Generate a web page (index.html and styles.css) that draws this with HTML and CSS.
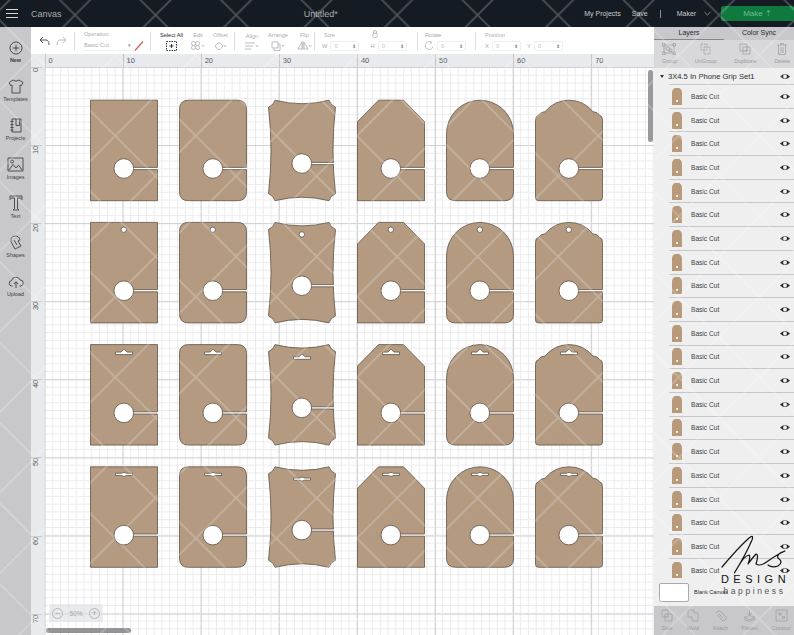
FILE: index.html
```html
<!DOCTYPE html>
<html lang="en">
<head>
    <meta charset="UTF-8">
    <title>Canvas - Untitled</title>
    <link rel="stylesheet" href="styles.css">
</head>
<body>
    <svg class="defs" width="0" height="0">
        <defs>
            <path id="eye" d="M0 3.5Q5-1.5 10 3.5Q5 8.5 0 3.5ZM5 1.6a1.9 1.9 0 1 0 .01 0Z" fill-rule="evenodd"/>
            <path id="s1" d="M0 0H67V100.5H0Z"/>
            <path id="s2" d="M9 0H58Q67 0 67 9V91.5Q67 100.5 58 100.5H9Q0 100.5 0 91.5V9Q0 0 9 0Z"/>
            <path id="s3" d="M0 7Q5 5 6.500 0Q33.500 7 60.500 0Q62 5 67 7Q62 50 67 93.500Q62 95.500 60.500 100.500Q33.500 93.500 6.500 100.500Q5 95.500 0 93.500Q5 50 0 7Z"/>
            <path id="s4" d="M21 0H46L67 21.500V100.500H0V21.500Z"/>
            <path id="s5" d="M0 33.500A33.500 33.500 0 0 1 67 33.500V91.500Q67 100.500 58 100.500H9Q0 100.500 0 91.500Z"/>
            <path id="s6" d="M3 100.500Q0 100.500 0 97.500V20Q0 15.500 3 15Q5 11.500 9.500 11.500Q19 0 33.500 0Q48 0 57.500 11.500Q62 11.500 64 15Q67 15.500 67 20V97.500Q67 100.500 64 100.500Z"/>
            <g id="cut">
                <rect class="slot" x="41" y="67.200" width="26.500" height="2.200"/>
                <path class="edge" d="M42.500 67.200H67M42.500 69.400H67"/>
                <circle class="hole" cx="33.300" cy="68.300" r="9.800"/>
            </g>
            <g id="cut3">
                <rect class="slot" x="41" y="62.200" width="24.500" height="2.200"/>
                <path class="edge" d="M42.500 62.200H65.500M42.500 64.400H65.500"/>
                <circle class="hole" cx="33.300" cy="63.300" r="9.800"/>
            </g>
            <circle id="pin" class="hole" cx="33.300" cy="7.300" r="2.700"/>
            <path id="hang" class="hole" d="M25 7.500H30.500L33.500 4.500L36.500 7.500H42V10H25Z"/>
            <path id="hang-round" class="hole" d="M25 6.500H31Q33.500 4.500 36 6.500H42V8.700H36Q33.500 10.700 31 8.700H25Z"/>
            <g id="thumb">
                <path d="M0 17V4.500A4.500 4.500 0 0 1 10 4.500V17Z" fill="#b89a7b"/>
                <rect x="4.200" y="12" width="1.800" height="1.800" fill="#fff"/>
            </g>
        </defs>
    </svg>

    <div class="app">
        <header class="topbar">
            <div class="burger"><span></span><span></span><span></span></div>
            <span class="brand">Canvas</span>
            <span class="doc-title">Untitled*</span>
            <span class="top-link">My Projects</span>
            <span class="top-link save">Save</span>
            <span class="top-sep"></span>
            <span class="top-link maker">Maker</span>
            <svg class="chev" width="7" height="5" viewBox="0 0 7 5"><path d="M.5 1L3.500 4L6.500 1" fill="none" stroke="#8b9096"/></svg>
            <button class="make">Make ⇡</button>
        </header>

        <div class="main">
            <nav class="sidebar">
                <div class="side-item">
                    <svg width="14" height="14" viewBox="0 0 14 14"><circle cx="7" cy="7" r="6" /><path d="M7 4V10M4 7H10"/></svg>
                    <span class="strong">New</span>
                </div>
                <div class="side-item">
                    <svg width="16" height="15" viewBox="0 0 16 15"><path d="M5 1L1 3.500L2.500 6.500L4 6V14H12V6L13.500 6.500L15 3.500L11 1Q8 3.500 5 1Z"/></svg>
                    <span>Templates</span>
                </div>
                <div class="side-item">
                    <svg width="14" height="15" viewBox="0 0 14 15"><path d="M3 1H12V14H3ZM1.500 3.500H4.500M1.500 6.500H4.500M1.500 9.500H4.500M1.500 12H4.500M7 1V7.500H10.500V1"/></svg>
                    <span>Projects</span>
                </div>
                <div class="side-item">
                    <svg width="17" height="15" viewBox="0 0 17 15"><path d="M1 1H16V14H1ZM2 13L6 7.500L9 11L11.500 8L15 13"/><circle cx="5" cy="4.500" r="1.500"/></svg>
                    <span>Images</span>
                </div>
                <div class="side-item">
                    <svg width="14" height="16" viewBox="0 0 14 16"><path d="M1 1H13V4.500L11.500 3H8.500V13.500L10 15H4L5.500 13.500V3H2.500L1 4.500Z"/></svg>
                    <span>Text</span>
                </div>
                <div class="side-item">
                    <svg width="14" height="15" viewBox="0 0 14 15"><path d="M6 1A4.500 4.500 0 0 0 3 8.500L6 14L12 11L9 6L11 5A4.500 4.500 0 0 0 6 1Z"/><path d="M5 5L8 10"/></svg>
                    <span>Shapes</span>
                </div>
                <div class="side-item">
                    <svg width="16" height="14" viewBox="0 0 16 14"><path d="M4.500 11H3.500A2.800 2.800 0 0 1 3.500 5.500A4.500 4.500 0 0 1 12 5A3 3 0 0 1 12.500 11H11.500M8 13V7M5.800 9L8 6.800L10.200 9"/></svg>
                    <span>Upload</span>
                </div>
            </nav>

            <div class="workspace">
                <div class="toolbar">
                    <div class="tool-group history">
                        <svg class="icon dark" width="11" height="10" viewBox="0 0 11 10"><path d="M4 1L1 4L4 7M1 4H7Q10 4 10 9"/></svg>
                        <svg class="icon" width="11" height="10" viewBox="0 0 11 10"><path d="M7 1L10 4L7 7M10 4H4Q1 4 1 9"/></svg>
                    </div>
                    <div class="tool-group operation">
                        <div class="tool">
                            <span class="tool-label">Operation</span>
                            <div class="op-row">
                                <span class="select">Basic Cut <i>▾</i></span>
                                <svg width="10" height="10" viewBox="0 0 10 10"><path d="M1 9.500L9 .5" stroke="#d2606a" stroke-width="1.300"/></svg>
                            </div>
                        </div>
                    </div>
                    <div class="tool-group edits">
                        <div class="tool">
                            <span class="tool-label black">Select All</span>
                            <svg width="11" height="10" viewBox="0 0 11 10"><path d="M.5.5H10.500V9.500H.5Z" fill="none" stroke="#333" stroke-dasharray="1.500 1"/><path d="M5.500 3V7M3.500 5H7.500" stroke="#333"/></svg>
                        </div>
                        <div class="tool">
                            <span class="tool-label">Edit</span>
                            <svg class="icon" width="14" height="9" viewBox="0 0 14 9"><circle cx="2.500" cy="2.500" r="2"/><circle cx="6.500" cy="2.500" r="2"/><circle cx="2.500" cy="6.500" r="2"/><circle cx="6.500" cy="6.500" r="2"/><path d="M10.500 4L12 5.500L13.500 4" /></svg>
                        </div>
                        <div class="tool">
                            <span class="tool-label">Offset</span>
                            <svg class="icon" width="14" height="10" viewBox="0 0 14 10"><path d="M2 5L5 2H7L10 5L7 8.500H5Z" /><path d="M11 4L12 5.500L13.500 4"/></svg>
                        </div>
                    </div>
                    <div class="tool-group arrange">
                        <div class="tool">
                            <span class="tool-label">Align</span>
                            <svg class="icon" width="14" height="8" viewBox="0 0 14 8"><path d="M0 1H10M0 4H8M0 7H6M11 3L12 4.500L13.500 3"/></svg>
                        </div>
                        <div class="tool">
                            <span class="tool-label">Arrange</span>
                            <svg class="icon" width="14" height="10" viewBox="0 0 14 10"><path d="M1 1H7V7H1ZM3 7V9.500H9V3H7M11 4L12 5.500L13.500 4"/></svg>
                        </div>
                        <div class="tool">
                            <span class="tool-label">Flip</span>
                            <svg class="icon" width="15" height="9" viewBox="0 0 15 9"><path d="M5 1L1 8H5ZM7 1L11 8H7ZM6 0V9M12 4L13 5.500L14.500 4"/></svg>
                        </div>
                    </div>
                    <div class="tool-group size">
                        <div class="tool">
                            <div class="size-head">
                                <span class="tool-label">Size</span>
                                <svg class="icon lock" width="6" height="8" viewBox="0 0 6 8"><path d="M1.500 3.500V2A1.500 1.500 0 0 1 4.500 2V3.500"/><circle cx="3" cy="5.300" r="2.300"/></svg>
                            </div>
                            <div class="field-row">
                                <span class="axis">W</span><span class="field wide">0<i>⬍</i></span>
                                <span class="axis h">H</span><span class="field wide">0<i>⬍</i></span>
                            </div>
                        </div>
                    </div>
                    <div class="tool-group rotate">
                        <div class="tool">
                            <span class="tool-label">Rotate</span>
                            <div class="field-row">
                                <svg class="icon" width="9" height="9" viewBox="0 0 9 9"><path d="M7.800 6A3.800 3.800 0 1 1 5.500 1M5 .2L7 1.500L5 2.800"/></svg>
                                <span class="field">0<i>⬍</i></span>
                            </div>
                        </div>
                    </div>
                    <div class="tool-group position">
                        <div class="tool">
                            <span class="tool-label">Position</span>
                            <div class="field-row">
                                <span class="axis">X</span><span class="field wide">0<i>⬍</i></span>
                                <span class="axis y">Y</span><span class="field wide">0<i>⬍</i></span>
                            </div>
                        </div>
                    </div>
                </div>

                <div class="ruler-h">
                    <span>0</span><span>10</span><span>20</span><span>30</span><span>40</span><span>50</span><span>60</span><span>70</span>
                </div>

                <div class="stage">
                    <div class="ruler-v">
                        <span>0</span><span>10</span><span>20</span><span>30</span><span>40</span><span>50</span><span>60</span><span>70</span>
                    </div>
                    <div class="canvas">
                        <svg class="tags" width="610" height="568" viewBox="0 0 610 568">
                            <!-- row 1 -->
                            <g transform="translate(46.500 33.200)">
                                <use href="#s1"/><use href="#cut"/>
                                <g transform="translate(89 0)"><use href="#s2"/><use href="#cut"/></g>
                                <g transform="translate(178 0)"><use href="#s3"/><use href="#cut3"/></g>
                                <g transform="translate(267 0)"><use href="#s4"/><use href="#cut"/></g>
                                <g transform="translate(356 0)"><use href="#s5"/><use href="#cut"/></g>
                                <g transform="translate(445 0)"><use href="#s6"/><use href="#cut"/></g>
                            </g>
                            <!-- row 2 -->
                            <g transform="translate(46.500 155.400)">
                                <use href="#s1"/><use href="#cut"/><use href="#pin"/>
                                <g transform="translate(89 0)"><use href="#s2"/><use href="#cut"/><use href="#pin"/></g>
                                <g transform="translate(178 0)"><use href="#s3"/><use href="#cut3"/><use href="#pin" y="4.700"/></g>
                                <g transform="translate(267 0)"><use href="#s4"/><use href="#cut"/><use href="#pin"/></g>
                                <g transform="translate(356 0)"><use href="#s5"/><use href="#cut"/><use href="#pin"/></g>
                                <g transform="translate(445 0)"><use href="#s6"/><use href="#cut"/><use href="#pin"/></g>
                            </g>
                            <!-- row 3 -->
                            <g transform="translate(46.500 277.600)">
                                <use href="#s1"/><use href="#cut"/><use href="#hang"/>
                                <g transform="translate(89 0)"><use href="#s2"/><use href="#cut"/><use href="#hang"/></g>
                                <g transform="translate(178 0)"><use href="#s3"/><use href="#cut3"/><use href="#hang" y="4.700"/></g>
                                <g transform="translate(267 0)"><use href="#s4"/><use href="#cut"/><use href="#hang"/></g>
                                <g transform="translate(356 0)"><use href="#s5"/><use href="#cut"/><use href="#hang"/></g>
                                <g transform="translate(445 0)"><use href="#s6"/><use href="#cut"/><use href="#hang"/></g>
                            </g>
                            <!-- row 4 -->
                            <g transform="translate(46.500 399.800)">
                                <use href="#s1"/><use href="#cut"/><use href="#hang-round"/>
                                <g transform="translate(89 0)"><use href="#s2"/><use href="#cut"/><use href="#hang-round"/></g>
                                <g transform="translate(178 0)"><use href="#s3"/><use href="#cut3"/><use href="#hang-round" y="4.700"/></g>
                                <g transform="translate(267 0)"><use href="#s4"/><use href="#cut"/><use href="#hang-round"/></g>
                                <g transform="translate(356 0)"><use href="#s5"/><use href="#cut"/><use href="#hang-round"/></g>
                                <g transform="translate(445 0)"><use href="#s6"/><use href="#cut"/><use href="#hang-round"/></g>
                            </g>
                        </svg>
                        <div class="scroll-v"></div>
                        <div class="scroll-h"></div>
                        <div class="zoom-box">
                            <span class="zoom-btn">−</span>
                            <span class="zoom-val">50%</span>
                            <span class="zoom-btn">+</span>
                        </div>
                    </div>
                </div>
            </div>

            <aside class="panel">
                <div class="tabs">
                    <span class="tab active">Layers</span>
                    <span class="tab">Color Sync</span>
                </div>
                <div class="layer-tools">
                    <div class="layer-tool">
                        <svg width="14" height="12" viewBox="0 0 14 12"><path d="M2 2H12V10H2ZM4 4H8V7H4ZM7 6H10V8.500H7Z"/><path d="M.5.5H3V3H.5ZM11 .5H13.500V3H11ZM.5 9H3V11.500H.5ZM11 9H13.500V11.500H11Z"/></svg>
                        <span>Group</span>
                    </div>
                    <div class="layer-tool">
                        <svg width="13" height="12" viewBox="0 0 13 12"><path d="M2 1H8V7H2ZM5 4H11V11H5Z" stroke-dasharray="2 .8"/></svg>
                        <span>UnGroup</span>
                    </div>
                    <div class="layer-tool">
                        <svg width="12" height="12" viewBox="0 0 12 12"><path d="M1 1H8V8H1ZM4 4H11V11H4ZM6 7.500H9M7.500 6V9"/></svg>
                        <span>Duplicate</span>
                    </div>
                    <div class="layer-tool">
                        <svg width="10" height="12" viewBox="0 0 10 12"><path d="M0 2H10M3.500 2V.5H6.500V2M1.500 2V11.500H8.500V2M4 4V10M6 4V10"/></svg>
                        <span>Delete</span>
                    </div>
                </div>
                <div class="layers">
                    <div class="layer-head">
                        <i class="caret"></i>
                        <span>3X4.5 In Phone Grip Set1</span>
                        <svg class="eye" width="10" height="7" viewBox="0 0 10 7"><use href="#eye"/></svg>
                    </div>
                    <div class="layer"><svg width="10" height="17" viewBox="0 0 10 17"><use href="#thumb"/></svg><span>Basic Cut</span><svg class="eye" width="10" height="7" viewBox="0 0 10 7"><use href="#eye"/></svg></div>
                    <div class="layer"><svg width="10" height="17" viewBox="0 0 10 17"><use href="#thumb"/></svg><span>Basic Cut</span><svg class="eye" width="10" height="7" viewBox="0 0 10 7"><use href="#eye"/></svg></div>
                    <div class="layer"><svg width="10" height="17" viewBox="0 0 10 17"><use href="#thumb"/></svg><span>Basic Cut</span><svg class="eye" width="10" height="7" viewBox="0 0 10 7"><use href="#eye"/></svg></div>
                    <div class="layer"><svg width="10" height="17" viewBox="0 0 10 17"><use href="#thumb"/></svg><span>Basic Cut</span><svg class="eye" width="10" height="7" viewBox="0 0 10 7"><use href="#eye"/></svg></div>
                    <div class="layer"><svg width="10" height="17" viewBox="0 0 10 17"><use href="#thumb"/></svg><span>Basic Cut</span><svg class="eye" width="10" height="7" viewBox="0 0 10 7"><use href="#eye"/></svg></div>
                    <div class="layer"><svg width="10" height="17" viewBox="0 0 10 17"><use href="#thumb"/></svg><span>Basic Cut</span><svg class="eye" width="10" height="7" viewBox="0 0 10 7"><use href="#eye"/></svg></div>
                    <div class="layer"><svg width="10" height="17" viewBox="0 0 10 17"><use href="#thumb"/></svg><span>Basic Cut</span><svg class="eye" width="10" height="7" viewBox="0 0 10 7"><use href="#eye"/></svg></div>
                    <div class="layer"><svg width="10" height="17" viewBox="0 0 10 17"><use href="#thumb"/></svg><span>Basic Cut</span><svg class="eye" width="10" height="7" viewBox="0 0 10 7"><use href="#eye"/></svg></div>
                    <div class="layer"><svg width="10" height="17" viewBox="0 0 10 17"><use href="#thumb"/></svg><span>Basic Cut</span><svg class="eye" width="10" height="7" viewBox="0 0 10 7"><use href="#eye"/></svg></div>
                    <div class="layer"><svg width="10" height="17" viewBox="0 0 10 17"><use href="#thumb"/></svg><span>Basic Cut</span><svg class="eye" width="10" height="7" viewBox="0 0 10 7"><use href="#eye"/></svg></div>
                    <div class="layer"><svg width="10" height="17" viewBox="0 0 10 17"><use href="#thumb"/></svg><span>Basic Cut</span><svg class="eye" width="10" height="7" viewBox="0 0 10 7"><use href="#eye"/></svg></div>
                    <div class="layer"><svg width="10" height="17" viewBox="0 0 10 17"><use href="#thumb"/></svg><span>Basic Cut</span><svg class="eye" width="10" height="7" viewBox="0 0 10 7"><use href="#eye"/></svg></div>
                    <div class="layer"><svg width="10" height="17" viewBox="0 0 10 17"><use href="#thumb"/></svg><span>Basic Cut</span><svg class="eye" width="10" height="7" viewBox="0 0 10 7"><use href="#eye"/></svg></div>
                    <div class="layer"><svg width="10" height="17" viewBox="0 0 10 17"><use href="#thumb"/></svg><span>Basic Cut</span><svg class="eye" width="10" height="7" viewBox="0 0 10 7"><use href="#eye"/></svg></div>
                    <div class="layer"><svg width="10" height="17" viewBox="0 0 10 17"><use href="#thumb"/></svg><span>Basic Cut</span><svg class="eye" width="10" height="7" viewBox="0 0 10 7"><use href="#eye"/></svg></div>
                    <div class="layer"><svg width="10" height="17" viewBox="0 0 10 17"><use href="#thumb"/></svg><span>Basic Cut</span><svg class="eye" width="10" height="7" viewBox="0 0 10 7"><use href="#eye"/></svg></div>
                    <div class="layer"><svg width="10" height="17" viewBox="0 0 10 17"><use href="#thumb"/></svg><span>Basic Cut</span><svg class="eye" width="10" height="7" viewBox="0 0 10 7"><use href="#eye"/></svg></div>
                    <div class="layer"><svg width="10" height="17" viewBox="0 0 10 17"><use href="#thumb"/></svg><span>Basic Cut</span><svg class="eye" width="10" height="7" viewBox="0 0 10 7"><use href="#eye"/></svg></div>
                    <div class="layer"><svg width="10" height="17" viewBox="0 0 10 17"><use href="#thumb"/></svg><span>Basic Cut</span><svg class="eye" width="10" height="7" viewBox="0 0 10 7"><use href="#eye"/></svg></div>
                    <div class="layer"><svg width="10" height="17" viewBox="0 0 10 17"><use href="#thumb"/></svg><span>Basic Cut</span><svg class="eye" width="10" height="7" viewBox="0 0 10 7"><use href="#eye"/></svg></div>
                    <div class="layer"><svg width="10" height="17" viewBox="0 0 10 17"><use href="#thumb"/></svg><span>Basic Cut</span><svg class="eye" width="10" height="7" viewBox="0 0 10 7"><use href="#eye"/></svg></div>
                </div>
                <div class="blank">
                    <div class="swatch"></div>
                    <span>Blank Canvas</span>
                </div>
                <div class="actions">
                    <div class="layer-tool">
                        <svg width="12" height="13" viewBox="0 0 12 13"><path d="M1 1H7V8H1ZM4 5H11V12H4Z"/></svg>
                        <span>Slice</span>
                    </div>
                    <div class="layer-tool">
                        <svg width="12" height="13" viewBox="0 0 12 13"><path d="M1 1H7V4H11V12H5V8H1Z"/></svg>
                        <span>Weld</span>
                    </div>
                    <div class="layer-tool">
                        <svg width="13" height="13" viewBox="0 0 13 13"><path d="M2 4L4 2Q5 1 6 2L12 8Q13 10 11 11.500Q9 12.500 8 11L3 6M5 5L9 9"/></svg>
                        <span>Attach</span>
                    </div>
                    <div class="layer-tool">
                        <svg width="13" height="13" viewBox="0 0 13 13"><path d="M6.500 1V6M4.500 4L6.500 6.500L8.500 4M1 8.500L6.500 6.500L12 8.500L6.500 11ZM1 10.500L6.500 12.500L12 10.500"/></svg>
                        <span>Flatten</span>
                    </div>
                    <div class="layer-tool">
                        <svg width="13" height="13" viewBox="0 0 13 13"><path d="M1 1H12V12H1Z"/><path d="M4 4H6V6H4ZM7.500 7.500H9.500V9.500H7.500Z"/></svg>
                        <span>Contour</span>
                    </div>
                </div>
            </aside>
        </div>
    </div>

    <!-- preview watermark over the whole shot -->
    <svg class="watermark" width="794" height="635">
        <defs>
            <pattern id="cross" patternUnits="userSpaceOnUse" x="34.800" y="-25.200" width="80.500" height="80.500">
                <path d="M0 0L80.500 80.500M80.500 0L0 80.500" stroke="#fff" stroke-width="1.800" fill="none"/>
            </pattern>
        </defs>
        <rect width="794" height="635" fill="url(#cross)"/>
    </svg>
    <div class="stamp">
        <svg class="stamp-mark" width="76" height="42" viewBox="0 0 76 42"><path d="M4 33Q20 14 31 4Q36 0 34 6Q28 20 17 38Q15 41 20 33Q26 22 31 21Q33 23 30 30Q32 27 38 20Q41 20 38 30Q42 33 50 27Q60 20 67 17Q58 20 60 24Q66 28 60 32Q54 34 50 31" fill="none" stroke="#111" stroke-width="1.200" stroke-linecap="round" stroke-linejoin="round"/></svg>
        <div class="stamp-title">DESIGN</div>
        <div class="stamp-sub">happiness</div>
    </div>
</body>
</html>
```

FILE: styles.css
```css
* {
    box-sizing: border-box;
}
body {
    margin: 0;
    width: 794px;
    height: 635px;
    overflow: hidden;
    position: relative;
    font-family: "Liberation Sans", Arial, sans-serif;
    background: #fff;
}
.defs {
    position: absolute;
}
.app {
    display: flex;
    flex-direction: column;
    height: 635px;
}

/* Top bar */
.topbar {
    flex: 0 0 27px;
    display: flex;
    align-items: center;
    background: #141b22;
    color: #c9cbce;
    font-size: 7px;
}
.burger {
    display: flex;
    flex-direction: column;
    gap: 2.6px;
    width: 12px;
    margin-left: 6px;
}
.burger span {
    height: 1.4px;
    background: #d5d6d8;
}
.brand {
    margin-left: 13px;
    width: 60px;
    font-size: 9px;
    color: #a9adb1;
}
.doc-title {
    margin-left: 213px;
    width: 281px;
    font-size: 9px;
    color: #a9adb1;
}
.top-link {
    white-space: nowrap;
}
.save {
    margin-left: 11px;
}
.top-sep {
    width: 1px;
    height: 8px;
    margin: 0 16px 0 12px;
    background: #8b9096;
}
.chev {
    margin-left: 8px;
}
.make {
    margin-left: 10px;
    width: 73px;
    height: 15px;
    padding: 0;
    border: none;
    border-radius: 2px;
    background: #0f7a3d;
    color: #69c08e;
    font: 8px "Liberation Sans", Arial, sans-serif;
}

.main {
    flex: 1;
    display: flex;
    min-height: 0;
}

/* Left nav */
.sidebar {
    flex: 0 0 31px;
    min-width: 0;
    padding-top: 4px;
    background: #c8c8cc;
}
.side-item {
    height: 39px;
    display: flex;
    flex-direction: column;
    align-items: center;
    justify-content: flex-end;
    gap: 2px;
    padding-bottom: 7px;
    font-size: 5.400px;
    color: #3b3d40;
    white-space: nowrap;
}
.side-item svg {
    fill: none;
    stroke: #3f4145;
    stroke-width: 0.9;
}
.side-item .strong {
    font-weight: bold;
}

/* Toolbar */
.workspace {
    flex: 0 0 623px;
    min-width: 0;
    overflow: hidden;
    display: flex;
    flex-direction: column;
}
.toolbar {
    flex: 0 0 27px;
    display: flex;
    align-items: center;
    background: #fff;
}
.tool-group {
    display: flex;
    align-items: center;
    height: 18px;
    flex-shrink: 0;
    border-right: 1px solid #dcdde0;
}
.tool-group:last-child {
    border-right: none;
}
.history {
    width: 44px;
    gap: 6px;
    padding-left: 8px;
}
.operation {
    width: 76px;
    padding-left: 9px;
}
.edits {
    width: 84px;
    gap: 8px;
    padding-left: 9px;
}
.arrange {
    width: 80px;
    gap: 9px;
    padding-left: 10px;
}
.size {
    width: 103px;
    padding-left: 7px;
}
.rotate {
    width: 58px;
    padding-left: 7px;
}
.position {
    padding-left: 9px;
}
.tool {
    display: flex;
    flex-direction: column;
    align-items: center;
    gap: 2px;
}
.operation .tool,
.size .tool,
.rotate .tool,
.position .tool {
    align-items: flex-start;
}
.tool-label {
    font-size: 5.600px;
    line-height: 8px;
    color: #a9abb0;
    white-space: nowrap;
}
.tool-label.black {
    color: #26282b;
}
.icon {
    fill: none;
    stroke: #b4b6ba;
    stroke-width: 0.9;
}
.icon.dark {
    stroke: #3a3c40;
}
.op-row {
    display: flex;
    align-items: center;
    gap: 3px;
}
.select {
    display: flex;
    justify-content: space-between;
    width: 47px;
    height: 11px;
    line-height: 11px;
    font-size: 5.800px;
    color: #a9abb0;
    border-bottom: 1px solid #eceded;
}
.select i,
.field i {
    font-style: normal;
    font-size: 5px;
    color: #8e9094;
}
.size-head {
    display: flex;
    align-items: center;
    gap: 37px;
    margin-left: 2px;
}
.lock {
    margin-top: -2px;
}
.field-row {
    display: flex;
    align-items: center;
    gap: 3px;
}
.axis {
    font-size: 5.800px;
    color: #a9abb0;
}
.axis.h {
    margin-left: 8px;
}
.axis.y {
    margin-left: 3px;
}
.field {
    display: flex;
    justify-content: space-between;
    align-items: center;
    width: 29px;
    height: 10px;
    padding: 0 2px 0 3px;
    border: 1px solid #eeeef0;
    border-radius: 2px;
    font-size: 5.800px;
    color: #c2c3c7;
}

/* Rulers */
.ruler-h {
    flex: 0 0 13px;
    display: flex;
    padding-left: 13.500px;
    background: #e9eaee;
    font-size: 7.500px;
    color: #55585c;
}
.ruler-h span {
    flex: 0 0 78.100px;
    padding: 2px 0 0 3px;
    border-left: 1px solid #c4c5c9;
}
.stage {
    flex: 1;
    display: flex;
    min-height: 0;
}
.ruler-v {
    flex: 0 0 13px;
    background: #e9eaee;
    font-size: 7.500px;
    color: #55585c;
    overflow: hidden;
}
.ruler-v span {
    display: flex;
    justify-content: flex-end;
    align-items: flex-end;
    height: 78.100px;
    padding: 0 0 0 2px;
    border-bottom: 1px solid #c4c5c9;
    writing-mode: vertical-rl;
    transform: rotate(180deg);
}

/* Canvas */
.canvas {
    flex: 1;
    position: relative;
    overflow: hidden;
    background-color: #fff;
    background-image:
        linear-gradient(#cfd0d3 1px, transparent 1px),
        linear-gradient(90deg, #cfd0d3 1px, transparent 1px),
        linear-gradient(#ebebee 1px, transparent 1px),
        linear-gradient(90deg, #ebebee 1px, transparent 1px);
    background-size: 78.100px 78.100px, 78.100px 78.100px, 7.810px 7.810px, 7.810px 7.810px;
    background-position: 0 0, 0.500px 0, 0 0, 0.500px 0;
}
.tags {
    display: block;
    fill: #b39a80;
    stroke: #5f5346;
    stroke-width: 0.8;
}
.hole {
    fill: #fff;
}
.slot {
    fill: #fff;
    stroke: none;
}
.edge {
    fill: none;
}
.scroll-v {
    position: absolute;
    left: 604px;
    top: 3px;
    width: 5px;
    height: 72px;
    border-radius: 3px;
    background: #9a9a9c;
}
.scroll-h {
    position: absolute;
    left: 2px;
    bottom: 2px;
    width: 85px;
    height: 5px;
    border-radius: 3px;
    background: #949496;
}
.zoom-box {
    position: absolute;
    left: 5px;
    top: 537px;
    width: 54px;
    height: 18px;
    display: flex;
    align-items: center;
    justify-content: space-between;
    padding: 0 3px;
    border-radius: 2px;
    background: rgba(225, 226, 230, 0.7);
    font-size: 6.500px;
    color: #a4a6aa;
}
.zoom-btn {
    width: 11px;
    height: 11px;
    line-height: 9px;
    text-align: center;
    font-size: 9px;
    border: 1px solid #b4b6ba;
    border-radius: 50%;
}

/* Right panel */
.panel {
    flex: 0 0 140px;
    min-width: 0;
    display: flex;
    flex-direction: column;
    min-height: 0;
    background: #efeff0;
}
.tabs {
    flex: 0 0 13px;
    display: flex;
    background: #c8c8cc;
    font-size: 7px;
    color: #26282b;
}
.tab {
    flex: 1;
    line-height: 12px;
    text-align: center;
}
.tab.active {
    border-bottom: 1px solid #84868a;
}
.layer-tools {
    flex: 0 0 28px;
    display: flex;
    justify-content: space-between;
    padding: 3px 4px 0 8px;
    background: #d8d8db;
}
.layer-tool {
    display: flex;
    flex-direction: column;
    align-items: center;
    gap: 3px;
    font-size: 5.400px;
    color: #97999d;
}
.layer-tool svg {
    fill: none;
    stroke: #9fa1a5;
    stroke-width: 0.8;
}
.layers {
    flex: 1;
    min-height: 0;
    overflow: hidden;
}
.layer-head {
    height: 16px;
    display: flex;
    align-items: center;
    padding: 0 4px 0 6px;
    font-size: 7.600px;
    color: #2a2c2f;
}
.caret {
    width: 0;
    height: 0;
    margin-right: 4px;
    border-left: 2px solid transparent;
    border-right: 2px solid transparent;
    border-top: 3px solid #333;
}
.layer-head span,
.layer span {
    flex: 1;
}
.eye {
    fill: #26282b;
}
.layer {
    height: 23.700px;
    display: flex;
    align-items: center;
    gap: 9px;
    margin-left: 15px;
    padding: 0 4px 0 3px;
    border-top: 1px solid #c6c7ca;
    font-size: 6.600px;
    color: #3a3c40;
}
.blank {
    flex: 0 0 28px;
    display: flex;
    align-items: center;
    gap: 5px;
    padding-left: 5px;
    background: #efeff0;
    font-size: 5.500px;
    color: #26282b;
}
.swatch {
    width: 30px;
    height: 19px;
    background: #fff;
    border: 1px solid #a8a9ad;
    border-radius: 2px;
}
.actions {
    flex: 0 0 29px;
    display: flex;
    justify-content: space-between;
    padding: 3px 3px 0 7px;
    background: #c8c8cc;
}

/* Overlays */
.watermark {
    position: absolute;
    left: 0;
    top: 0;
    opacity: 0.24;
    pointer-events: none;
}
.stamp {
    position: absolute;
    left: 712px;
    top: 534px;
    width: 82px;
    text-align: center;
    color: #111;
}
.stamp-mark {
    position: absolute;
    left: 6px;
    top: 0;
}
.stamp-title {
    margin-top: 39px;
    padding-left: 5px;
    font-size: 11px;
    line-height: 13px;
    letter-spacing: 4.500px;
}
.stamp-sub {
    padding-left: 3px;
    font-size: 8.500px;
    line-height: 11px;
    letter-spacing: 2.600px;
    color: #555;
}
```
